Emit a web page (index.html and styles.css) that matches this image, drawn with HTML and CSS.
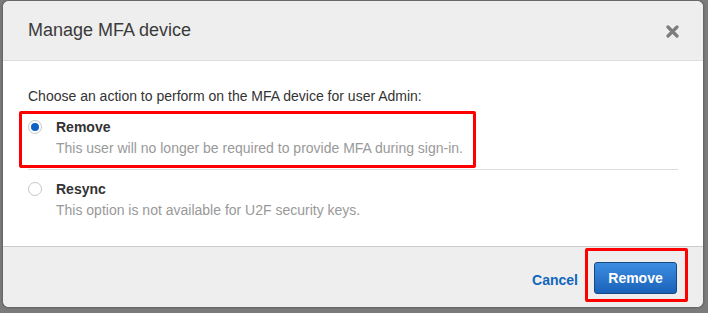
FILE: index.html
```html
<!DOCTYPE html>
<html>
<head>
<meta charset="utf-8">
<link rel="stylesheet" href="styles.css">
</head>
<body>
<div class="modal">
  <div class="modal-header">
    <h2 class="modal-title">Manage MFA device</h2>
    <button class="close" aria-label="Close">
      <svg width="13" height="13" viewBox="0 0 13 13"><path d="M2 2 L11 11 M11 2 L2 11" stroke="#7d7d7d" stroke-width="3.2" stroke-linecap="round"/></svg>
    </button>
  </div>
  <div class="modal-body">
    <p class="prompt">Choose an action to perform on the MFA device for user Admin:</p>
    <div class="option highlight">
      <span class="radio checked"></span>
      <div class="option-text">
        <div class="option-title">Remove</div>
        <div class="option-desc">This user will no longer be required to provide MFA during sign-in.</div>
      </div>
    </div>
    <div class="separator"></div>
    <div class="option second">
      <span class="radio"></span>
      <div class="option-text">
        <div class="option-title">Resync</div>
        <div class="option-desc">This option is not available for U2F security keys.</div>
      </div>
    </div>
  </div>
  <div class="modal-footer">
    <a class="cancel" href="#">Cancel</a>
    <div class="btn-highlight">
      <button class="btn-primary">Remove</button>
    </div>
  </div>
</div>
</body>
</html>
```
FILE: styles.css
```css
html, body {
  margin: 0;
  padding: 0;
}
body {
  background: #7b7b7b;
  font-family: "Liberation Sans", Arial, sans-serif;
  width: 708px;
  height: 313px;
  overflow: hidden;
}
.modal {
  margin: 1px 0 0 3px;
  width: 700px;
  background: #fff;
  border-radius: 6px;
  overflow: hidden;
  box-shadow: 0 0 3px rgba(0,0,0,0.45);
}
.modal-header {
  height: 59px;
  background: #eeeeee;
  border-bottom: 1px solid #dddddd;
  display: flex;
  align-items: center;
  justify-content: space-between;
  padding: 0 24px 0 25px;
}
.modal-title {
  margin: 0;
  font-size: 18px;
  font-weight: normal;
  color: #3a3a3a;
}
.close {
  border: 0;
  background: none;
  padding: 0;
  width: 13px;
  height: 13px;
  display: flex;
  margin-top: 1px;
}
.modal-body {
  padding: 25px 25px 26px 25px;
  color: #333;
  font-size: 14px;
}
.prompt {
  margin: 0;
  line-height: 20px;
}
.option {
  display: flex;
  align-items: flex-start;
}
.highlight {
  margin-top: 5px;
  margin-left: -9px;
  width: fit-content;
  border: 3px solid #ff0000;
  border-radius: 2px;
  padding: 3px 10px 7px 6px;
}
.second {
  padding-top: 9px;
}
.radio {
  width: 14px;
  height: 14px;
  box-sizing: border-box;
  border-radius: 50%;
  border: 1px solid #c8c8c8;
  background: #fff;
  margin: 3px 14px 0 0;
  flex-shrink: 0;
  position: relative;
}
.radio.checked::after {
  content: "";
  position: absolute;
  left: 2px;
  top: 2px;
  width: 8px;
  height: 8px;
  border-radius: 50%;
  background: #0e62c4;
}
.option-title {
  font-weight: bold;
  line-height: 20px;
  color: #333;
}
.option-desc {
  margin-top: 1px;
  line-height: 20px;
  color: #999999;
}
.separator {
  margin-top: 1px;
  height: 1px;
  background: #dddddd;
}
.modal-footer {
  height: 61px;
  box-sizing: border-box;
  background: #eeeeee;
  border-top: 1px solid #cccccc;
  display: flex;
  justify-content: flex-end;
  align-items: flex-start;
  padding: 1px 15px 0 0;
}
.cancel {
  color: #1166bb;
  font-weight: bold;
  font-size: 14px;
  text-decoration: none;
  margin: 22px 7px 0 0;
  line-height: 20px;
}
.btn-highlight {
  border: 3px solid #ff0000;
  border-radius: 2px;
  padding: 11px 8px 5px 6px;
  display: flex;
}
.btn-primary {
  width: 83px;
  height: 32px;
  border: 1px solid #17487f;
  border-radius: 3px;
  background: linear-gradient(#3c8ee2, #1a62b9);
  color: #fff;
  font-family: "Liberation Sans", Arial, sans-serif;
  font-weight: bold;
  font-size: 14px;
  padding: 0;
}
```
